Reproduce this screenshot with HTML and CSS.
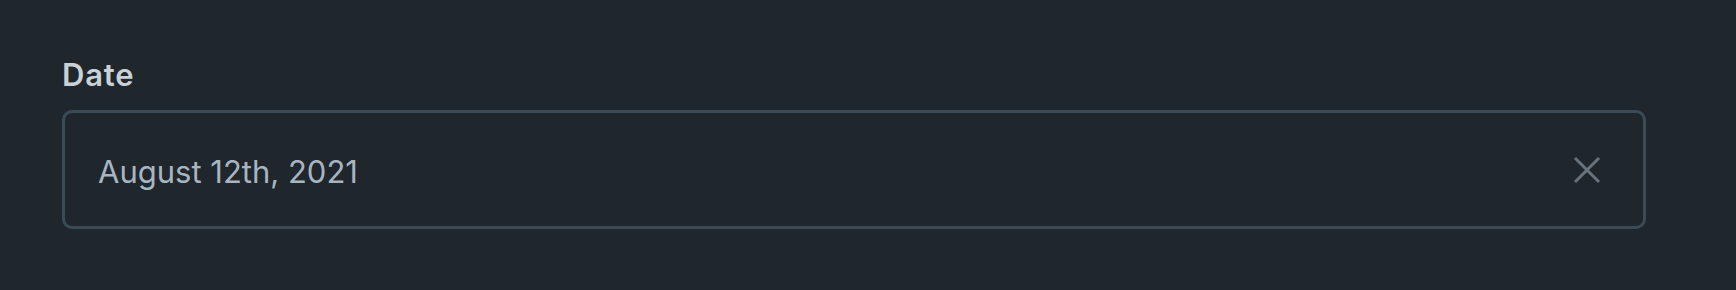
FILE: index.html
```html
<!DOCTYPE html>
<html lang="en">
<head>
<meta charset="utf-8">
<link rel="stylesheet" href="styles.css">
<title>Date</title>
</head>
<body>
<div class="field">
  <label class="label" for="date">Date</label>
  <div class="input">
    <span class="value" id="date">August 12th, 2021</span>
    <button class="clear" aria-label="Clear">
      <svg viewBox="0 0 28 28" width="28" height="28"><path d="M2 2 L26 26 M26 2 L2 26" stroke="currentColor" stroke-width="3" fill="none"/></svg>
    </button>
  </div>
</div>
</body>
</html>
```
FILE: styles.css
```css
html, body {
  margin: 0;
  padding: 0;
  background: #1f262c;
  height: 100%;
}
body {
  font-family: Inter, "Noto Sans", sans-serif;
}
.field {
  padding: 56px 0 0 62px;
  width: 1584px;
  display: flex;
  flex-direction: column;
  gap: 17px;
}
.label {
  font-size: 31px;
  line-height: 37px;
  font-weight: 600;
  letter-spacing: 0.8px;
  color: #c9d0d7;
}
.input {
  box-sizing: border-box;
  height: 119px;
  border: 3px solid #3b4b56;
  border-radius: 10px;
  display: flex;
  align-items: center;
  justify-content: space-between;
  padding: 4px 42px 0 33px;
}
.value {
  font-size: 31px;
  line-height: 37px;
  color: #a8b5c1;
}
.clear {
  background: none;
  border: 0;
  padding: 0;
  color: #68737c;
  display: flex;
  margin-top: -4px;
}
```
